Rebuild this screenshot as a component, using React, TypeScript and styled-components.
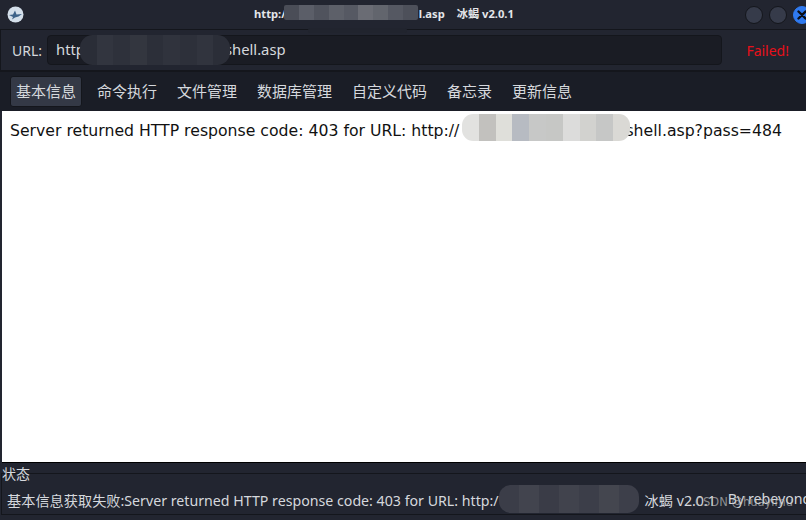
import styled, { createGlobalStyle } from "styled-components";

const GlobalStyle = createGlobalStyle`
  html, body {
    margin: 0;
    padding: 0;
    background: #222530;
  }
`;

const Window = styled.div`
  width: 806px;
  height: 520px;
  display: flex;
  flex-direction: column;
  overflow: hidden;
  position: relative;
  background: #222530;
  font-family: "Noto Sans", "Noto Sans CJK SC", sans-serif;
  color: #d5d8dd;
`;

const TitleBar = styled.div`
  height: 30px;
  flex: none;
  box-sizing: border-box;
  position: relative;
  display: flex;
  align-items: center;
  justify-content: space-between;
  padding: 0 0 0 7px;
  background: #222530;
  border-bottom: 1px solid #14161c;
`;

const TitleText = styled.div`
  position: absolute;
  left: 254px;
  top: 5px;
  display: flex;
  font-family: "Noto Sans", "Noto Sans CJK SC", sans-serif;
  font-size: 11.2px;
  font-weight: 700;
  line-height: 18px;
  white-space: nowrap;
  color: #e4e6ea;
`;

const Gap = styled.span<{ $w: number }>`
  display: inline-block;
  flex: none;
  width: ${(p) => p.$w}px;
`;

const WindowButtons = styled.div`
  display: flex;
  gap: 6px;
  margin-right: -5px;
`;

const WindowButton = styled.div<{ $close?: boolean }>`
  width: 18px;
  height: 18px;
  border-radius: 50%;
  box-sizing: border-box;
  display: flex;
  align-items: center;
  justify-content: center;
  border: 1px solid ${(p) => (p.$close ? "#2f7af0" : "#14161c")};
  background: ${(p) => (p.$close ? "#2f7af0" : "#363b4a")};
`;

const UrlRow = styled.div`
  height: 42px;
  flex: none;
  box-sizing: border-box;
  display: flex;
  align-items: center;
  padding: 0 17px 0 11px;
  border-left: 1px solid #14161c;
  border-bottom: 2px solid #14161c;
`;

const UrlLabel = styled.div`
  font-size: 14px;
  width: 35px;
  flex: none;
  color: #d5d8dd;
`;

const UrlInput = styled.div`
  width: 675px;
  height: 30px;
  flex: none;
  box-sizing: border-box;
  padding: 0 0 2px 8px;
  display: flex;
  align-items: center;
  font-size: 14.8px;
  color: #d5d8dd;
  background: #1a1c24;
  border: 1px solid #14161c;
  border-radius: 4px;
`;

const FailedText = styled.div`
  margin-left: auto;
  font-size: 14px;
  color: #e8101a;
`;

const TabBar = styled.div`
  height: 39px;
  flex: none;
  box-sizing: border-box;
  display: flex;
  align-items: center;
  gap: 8px;
  padding: 0 0 1px 10px;
  background: #1a1d26;
`;

const Tab = styled.div<{ $active?: boolean }>`
  height: 31px;
  box-sizing: border-box;
  display: flex;
  align-items: center;
  padding: 0 5px 2px;
  margin-right: ${(p) => (p.$active ? "1px" : "0")};
  font-family: "Noto Sans CJK SC", sans-serif;
  font-size: 15px;
  border-radius: 3px;
  color: #d5d8dd;
  background: ${(p) => (p.$active ? "#343946" : "transparent")};
  border: 1px solid ${(p) => (p.$active ? "#14161c" : "transparent")};
`;

const Content = styled.div`
  flex: 1;
  margin-left: 2px;
  box-sizing: border-box;
  display: flex;
  padding: 10px 8px;
  background: #ffffff;
  border-bottom: 1px solid #000000;
  color: #111111;
  font-family: "DejaVu Sans", sans-serif;
  font-size: 15.7px;
  line-height: 20px;
  white-space: nowrap;
`;

const StatusArea = styled.div`
  height: 57px;
  flex: none;
  box-sizing: border-box;
  padding: 2px 0 5px 1px;
  display: flex;
  flex-direction: column;
`;

const StatusLabel = styled.div`
  font-family: "Noto Sans CJK SC", sans-serif;
  font-size: 14px;
  line-height: 16px;
  height: 8px;
  padding-left: 1px;
  position: relative;
  z-index: 1;
  color: #d5d8dd;
`;

const StatusBox = styled.div`
  flex: 1;
  box-sizing: border-box;
  display: flex;
  align-items: center;
  padding: 12px 0 0 5px;
  border: 1px solid #14161c;
  border-right: none;
  font-size: 14.2px;
  white-space: nowrap;
  overflow: hidden;
  color: #d5d8dd;
`;

const StatusAuthor = styled.span`
  flex: none;
  margin-left: 12px;
  margin-bottom: 3px;
`;

const Watermark = styled.div`
  position: absolute;
  left: 695px;
  top: 495px;
  font-family: "DejaVu Sans", sans-serif;
  font-size: 11.5px;
  line-height: 14px;
  white-space: nowrap;
  color: rgba(190, 190, 190, 0.7);
`;

const Mosaic = styled.div<{ $x: number; $y: number; $w: number; $h: number; $round?: number }>`
  position: absolute;
  left: ${(p) => p.$x}px;
  top: ${(p) => p.$y}px;
  width: ${(p) => p.$w}px;
  height: ${(p) => p.$h}px;
  display: flex;
  overflow: hidden;
  border-radius: ${(p) => p.$round ?? p.$h / 2.4}px;
`;

const MosaicCell = styled.div<{ $color: string }>`
  flex: 1;
  background: ${(p) => p.$color};
`;

const AppIcon = () => (
  <svg width="17" height="17" viewBox="0 0 17 17">
    <circle cx="8.5" cy="8.5" r="8" fill="#d4dfea" />
    <path d="M2 9 L6 8.5 L8 4.5 L9.5 8.5 L15 8 L11.5 10.5 L8 11.5 L5 13.5 L6 11 Z" fill="#3d6288" />
  </svg>
);

const CloseIcon = () => (
  <svg width="10" height="10" viewBox="0 0 10 10">
    <path d="M1.5 1.5 L8.5 8.5 M8.5 1.5 L1.5 8.5" stroke="#0b0f18" strokeWidth="2.4" strokeLinecap="round" />
  </svg>
);

const tabs = ["基本信息", "命令执行", "文件管理", "数据库管理", "自定义代码", "备忘录", "更新信息"];

const titleMosaic = ["#4a4d57", "#5b5e68", "#50535d", "#5d6069", "#565963", "#6a6c74", "#62656d", "#555862", "#4d505a"];
const urlMosaic = ["#2a2d37", "#32353f", "#2e313b", "#33363f", "#2c2f39", "#30333d", "#2d303a", "#31343e", "#2b2e38"];
const bodyMosaic = ["#e2e2e0", "#c2c1be", "#dfdfda", "#b7bbc2", "#c7c8c7", "#c6c7c5", "#dcdcdb", "#d2d2cf", "#c6c7c6", "#dad9d5"];
const statusMosaic = ["#3b3d48", "#42444e", "#3a3c47", "#41434d", "#3c3e49", "#44464f", "#3d3f4a"];

const patches = [
  { x: 284, y: 5, w: 134, h: 15, round: 2, colors: titleMosaic },
  { x: 308, y: 28, w: 99, h: 5, round: 2, colors: ["#21242e"] },
  { x: 80, y: 35, w: 150, h: 30, colors: urlMosaic },
  { x: 462, y: 114, w: 168, h: 27, colors: bodyMosaic },
  { x: 499, y: 485, w: 140, h: 28, colors: statusMosaic },
];

export default function App() {
  return (
    <Window>
      <GlobalStyle />
      <TitleBar>
        <AppIcon />
        <TitleText>
          http:/
          <Gap $w={133} />
          l.asp
          <Gap $w={12} />
          冰蝎 v2.0.1
        </TitleText>
        <WindowButtons>
          <WindowButton />
          <WindowButton />
          <WindowButton $close>
            <CloseIcon />
          </WindowButton>
        </WindowButtons>
      </TitleBar>
      <UrlRow>
        <UrlLabel>URL:</UrlLabel>
        <UrlInput>
          http
          <Gap $w={140} />
          shell.asp
        </UrlInput>
        <FailedText>Failed!</FailedText>
      </UrlRow>
      <TabBar>
        {tabs.map((tab, i) => (
          <Tab key={tab} $active={i === 0}>
            {tab}
          </Tab>
        ))}
      </TabBar>
      <Content>
        Server returned HTTP response code: 403 for URL: http://
        <Gap $w={166} />
        shell.asp?pass=484
      </Content>
      <StatusArea>
        <StatusLabel>状态</StatusLabel>
        <StatusBox>
          基本信息获取失败:Server returned HTTP response code: 403 for URL: http:/
          <Gap $w={146} />
          冰蝎 v2.0.1
          <StatusAuthor>By rebeyond</StatusAuthor>
        </StatusBox>
      </StatusArea>
      <Watermark>CSDN @huayimu</Watermark>
      {patches.map((m) => (
        <Mosaic key={m.x} $x={m.x} $y={m.y} $w={m.w} $h={m.h} $round={m.round}>
          {m.colors.map((c, i) => (
            <MosaicCell key={i} $color={c} />
          ))}
        </Mosaic>
      ))}
    </Window>
  );
}
